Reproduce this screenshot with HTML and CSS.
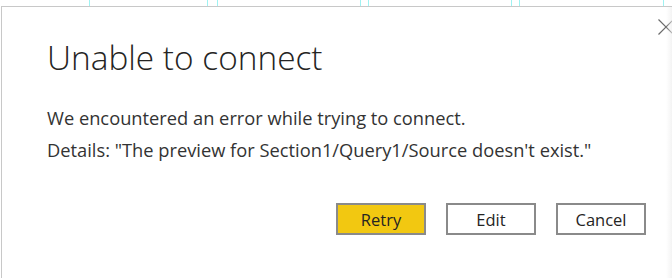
FILE: index.html
```html
<!DOCTYPE html>
<html>
<head>
<meta charset="utf-8">
<link rel="stylesheet" href="styles.css">
</head>
<body>
<div class="strip"></div>
<div class="dialog">
  <svg class="close" width="16" height="16" viewBox="0 0 16 16"><path d="M0.5 0.5 L15.5 15.5 M15.5 0.5 L0.5 15.5" stroke="#6b6b6b" stroke-width="1.2" fill="none"/></svg>
  <h1 class="title">Unable to connect</h1>
  <p class="msg">We encountered an error while trying to connect.</p>
  <p class="msg">Details: "The preview for Section1/Query1/Source doesn't exist."</p>
  <div class="actions">
    <button class="btn primary">Retry</button>
    <button class="btn">Edit</button>
    <button class="btn">Cancel</button>
  </div>
  <div class="edge"></div>
</div>
</body>
</html>
```
FILE: styles.css
```css
html, body {
  margin: 0;
  padding: 0;
  background: #ffffff;
  width: 672px;
  height: 278px;
  overflow: hidden;
  font-family: "Open Sans", "Noto Sans", sans-serif;
  color: #333333;
}
.strip {
  height: 6px;
  background-image:
    linear-gradient(#9ff2f2, #9ff2f2),
    linear-gradient(#9ff2f2, #9ff2f2),
    linear-gradient(#9ff2f2, #9ff2f2),
    linear-gradient(#9ff2f2, #9ff2f2),
    linear-gradient(#9ff2f2, #9ff2f2),
    linear-gradient(#9ff2f2, #9ff2f2),
    linear-gradient(#9ff2f2, #9ff2f2),
    linear-gradient(#9ff2f2, #9ff2f2);
  background-size: 1px 6px;
  background-repeat: no-repeat;
  background-position: 89px 0, 207px 0, 217px 0, 360px 0, 368px 0, 511px 0, 519px 0, 663px 0;
}
.dialog {
  position: relative;
  margin-left: 1px;
  border-left: 1px solid #c8c8c8;
  border-top: 1px solid #c8c8c8;
  padding-left: 45px;
  padding-top: 28px;
  box-sizing: border-box;
  height: 272px;
}
.close {
  position: absolute;
  top: 12px;
  left: 656px;
}
.title {
  margin: 0 0 27px 0;
  font-weight: 300;
  font-size: 33.4px;
  line-height: 44px;
  color: #252423;
}
.msg {
  margin: 0 0 8px 0;
  font-size: 18.3px;
  line-height: 24px;
  color: #333333;
}
.actions {
  display: flex;
  gap: 20px;
  margin-top: 41px;
  margin-left: 289px;
}
.btn {
  width: 90px;
  height: 32px;
  border: 2px solid #8a8a8a;
  background: #ffffff;
  font-family: "Open Sans", "Noto Sans", sans-serif;
  font-size: 16.5px;
  color: #252423;
  padding: 0;
  box-sizing: border-box;
}
.btn.primary {
  background: #f2c811;
}
.edge {
  position: absolute;
  top: 0;
  bottom: 0;
  left: 664px;
  width: 10px;
  background: linear-gradient(to right, rgba(240,240,240,0), #ececec);
}
```
